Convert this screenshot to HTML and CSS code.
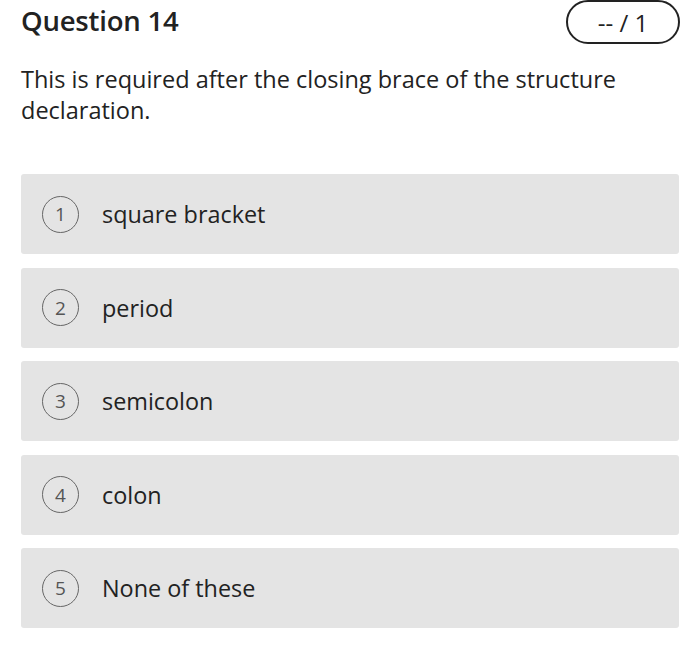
FILE: index.html
```html
<!DOCTYPE html>
<html lang="en">
<head>
<meta charset="utf-8">
<title>Question 14</title>
<link rel="stylesheet" href="styles.css">
</head>
<body>
<main class="question">
  <header class="q-header">
    <h1 class="q-title">Question 14</h1>
    <div class="q-score">-- / 1</div>
  </header>
  <p class="q-text">This is required after the closing brace of the structure declaration.</p>
  <ol class="options">
    <li class="option"><span class="opt-num">1</span><span class="opt-label">square bracket</span></li>
    <li class="option"><span class="opt-num">2</span><span class="opt-label">period</span></li>
    <li class="option"><span class="opt-num">3</span><span class="opt-label">semicolon</span></li>
    <li class="option"><span class="opt-num">4</span><span class="opt-label">colon</span></li>
    <li class="option"><span class="opt-num">5</span><span class="opt-label">None of these</span></li>
  </ol>
</main>
</body>
</html>
```
FILE: styles.css
```css
html, body {
  margin: 0;
  padding: 0;
  background: #ffffff;
}
body {
  font-family: "Open Sans", "Noto Sans", sans-serif;
  color: #222222;
}
.question {
  padding: 0 20px 0 21px;
}
.q-header {
  display: flex;
  justify-content: space-between;
  align-items: flex-start;
  height: 44px;
}
.q-title {
  margin: 0;
  font-size: 27.5px;
  font-weight: 600;
  line-height: 41px;
  letter-spacing: -0.2px;
  color: #222222;
}
.q-score {
  box-sizing: border-box;
  width: 114px;
  height: 44px;
  border: 2px solid #222222;
  border-radius: 22px;
  display: flex;
  align-items: center;
  justify-content: center;
  font-size: 24px;
  color: #222222;
}
.q-text {
  margin: 20px 0 0;
  padding-right: 40px;
  font-size: 23.5px;
  line-height: 31px;
  color: #222222;
}
.options {
  list-style: none;
  margin: 48px 0 0;
  padding: 0;
  display: flex;
  flex-direction: column;
  gap: 13.5px;
}
.option {
  box-sizing: border-box;
  height: 80px;
  margin-right: 1px;
  background: #e4e4e4;
  border-radius: 3px;
  display: flex;
  align-items: center;
  padding-left: 21px;
}
.opt-num {
  box-sizing: border-box;
  width: 37px;
  height: 37px;
  border: 1.5px solid #666666;
  border-radius: 50%;
  display: flex;
  align-items: center;
  justify-content: center;
  font-size: 19px;
  color: #555555;
  flex-shrink: 0;
}
.opt-label {
  margin-left: 23px;
  font-size: 23.4px;
  color: #222222;
}
```
